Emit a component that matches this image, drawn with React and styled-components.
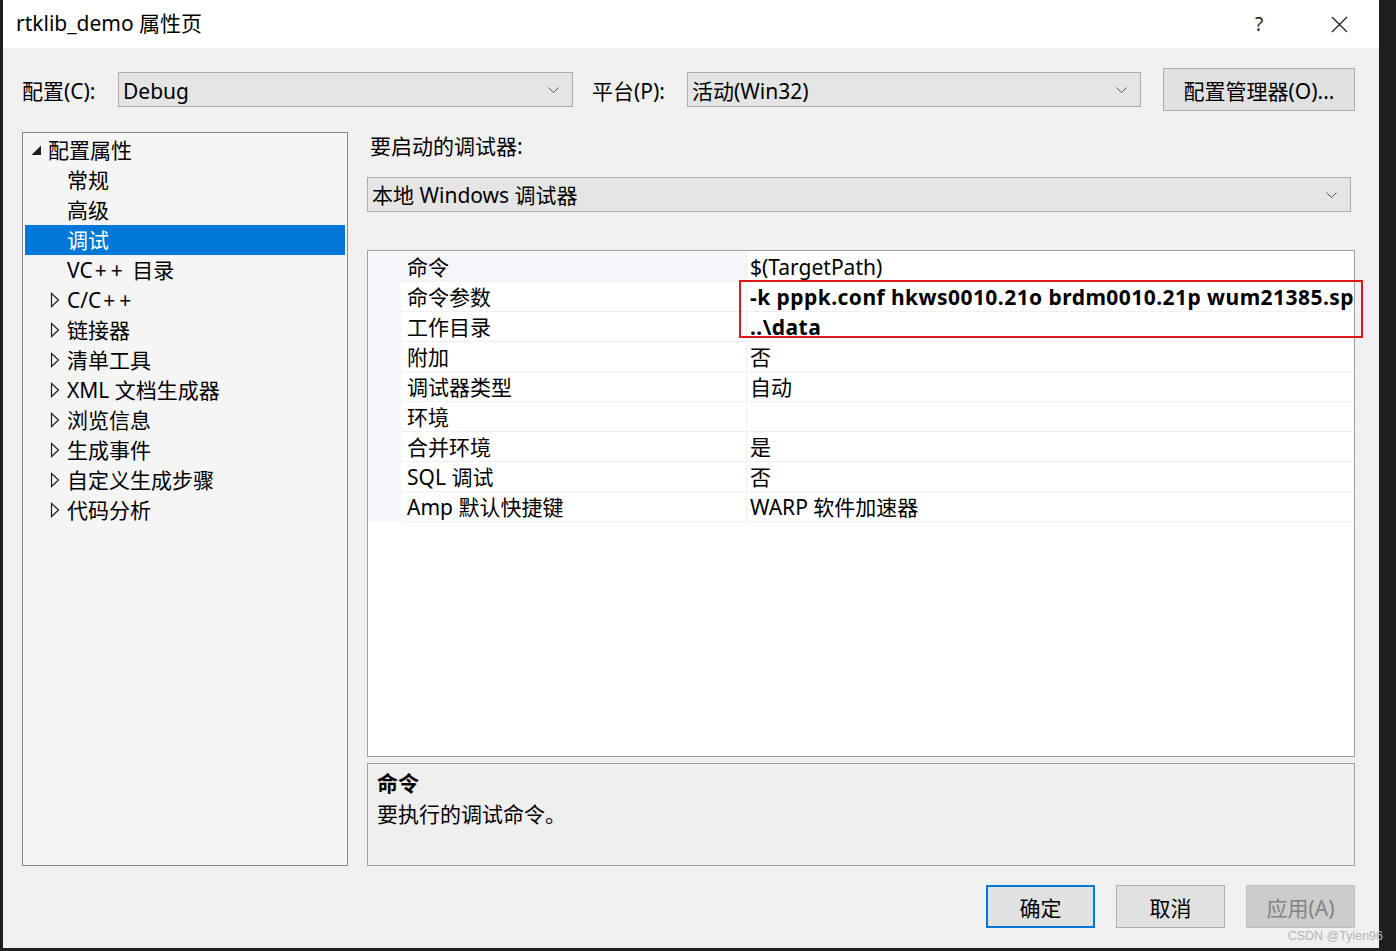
import styled, { createGlobalStyle } from "styled-components";

const GlobalStyle = createGlobalStyle`
  html, body {
    margin: 0;
    padding: 0;
    background: #1e1e1e;
  }
  body {
    font-family: "Noto Sans", "Noto Sans CJK SC", sans-serif;
    font-size: 21px;
    color: #000;
  }
  * {
    box-sizing: border-box;
  }
`;

const Dialog = styled.div`
  position: relative;
  width: 1376px;
  height: 948px;
  margin-left: 3px;
  background: #f0f0f0;
  display: flex;
  flex-direction: column;
`;

const TitleBar = styled.div`
  height: 48px;
  background: #fff;
  display: flex;
  align-items: center;
  padding-left: 13px;
`;

const Title = styled.div`
  flex: 1;
  font-size: 21px;
  line-height: 24px;
  margin-top: -2px;
`;

const TitleButton = styled.div`
  width: 80px;
  height: 48px;
  display: flex;
  align-items: center;
  justify-content: center;
  font-size: 19px;
  color: #222;
`;

const Content = styled.div`
  flex: 1;
  display: flex;
  flex-direction: column;
  padding: 20px 24px 0 19px;
`;

const ConfigRow = styled.div`
  display: flex;
  align-items: center;
  height: 43px;
`;

const Label = styled.div`
  width: ${(p) => p.width}px;
  line-height: 28px;
  padding-top: 2px;
`;

const Select = styled.div`
  width: ${(p) => p.width}px;
  height: 35px;
  margin-right: ${(p) => p.gap || 0}px;
  background: #e5e5e5;
  border: 1px solid #acacac;
  display: flex;
  align-items: center;
  padding: 2px 13px 0 4px;
  line-height: 28px;
  span {
    flex: 1;
  }
`;

const Button = styled.div`
  width: ${(p) => p.width || 109}px;
  height: 43px;
  display: flex;
  align-items: center;
  justify-content: center;
  background: ${(p) => (p.disabled ? "#cccccc" : "#e1e1e1")};
  border: ${(p) => (p.primary ? "2px solid #0078d7" : p.disabled ? "1px solid #bfbfbf" : "1px solid #adadad")};
  color: ${(p) => (p.disabled ? "#838383" : "#000")};
`;

const Body = styled.div`
  display: flex;
  gap: 19px;
  margin-top: 21px;
  height: 734px;
`;

const Tree = styled.div`
  width: 326px;
  background: #f5f5f5;
  border: 1px solid #828790;
  padding: 2px;
`;

const TreeItem = styled.div`
  height: 30px;
  display: flex;
  align-items: center;
  padding-left: ${(p) => p.indent}px;
  background: ${(p) => (p.selected ? "#0078d7" : "transparent")};
  color: ${(p) => (p.selected ? "#fff" : "#000")};
  line-height: 28px;
  white-space: pre;
`;

/* the "++" in VC++ / C/C++ is drawn with loose spacing in the tree font */
const Plus = styled.span`
  letter-spacing: 4px;
  padding-left: 2px;
`;

const Expander = styled.span`
  width: 17px;
  display: flex;
  align-items: center;
`;

const RightPane = styled.div`
  flex: 1;
  display: flex;
  flex-direction: column;
`;

const PaneLabel = styled.div`
  line-height: 28px;
  padding-left: 3px;
  height: 45px;
`;

const Grid = styled.div`
  position: relative;
  margin-top: 38px;
  height: 508px;
  background: #fff;
  border: 1px solid #a0a0a0;
  padding-top: 1px;
`;

const GridRow = styled.div`
  display: grid;
  grid-template-columns: 33px 346px 1fr;
  height: 30px;
`;

const Gutter = styled.div`
  background: #f4f6fa;
`;

const NameCell = styled.div`
  background: ${(p) => (p.active ? "#f4f6fa" : "#fff")};
  border-bottom: 1px solid #f0f0f0;
  border-right: 1px solid #f0f0f0;
  padding: 1px 0 0 6px;
  line-height: 28px;
  white-space: nowrap;
`;

const ValueCell = styled.div`
  border-bottom: 1px solid #f0f0f0;
  padding: 1px 0 0 3px;
  line-height: 28px;
  white-space: nowrap;
  overflow: hidden;
  font-weight: ${(p) => (p.bold ? 700 : 400)};
  letter-spacing: ${(p) => (p.bold ? "0.45px" : "0")};
`;

const Highlight = styled.div`
  position: absolute;
  left: 371px;
  top: 29px;
  width: 624px;
  height: 58px;
  border: 2px solid #e3151c;
  pointer-events: none;
`;

const Description = styled.div`
  margin-top: 6px;
  height: 103px;
  background: #efefef;
  border: 1px solid #a0a0a0;
  padding: 4px 9px;
  line-height: 31px;
  b {
    display: block;
  }
`;

const Footer = styled.div`
  display: flex;
  justify-content: flex-end;
  gap: 21px;
  margin-top: 19px;
`;

const Watermark = styled.div`
  position: absolute;
  right: -4px;
  bottom: 5px;
  font-family: "Liberation Sans", Arial, sans-serif;
  font-size: 12.5px;
  color: #b4b4b4;
  white-space: nowrap;
`;

const Chevron = () => (
  <svg width="11" height="7" viewBox="0 0 11 7">
    <path d="M0.5 0.5 L5.5 5.5 L10.5 0.5" fill="none" stroke="#555" strokeWidth="1" />
  </svg>
);

const Collapsed = () => (
  <svg width="10" height="16" viewBox="0 0 10 16">
    <path d="M1.5 1.5 L8.5 8 L1.5 14.5 Z" fill="none" stroke="#1e1e1e" strokeWidth="1.2" />
  </svg>
);

const Expanded = () => (
  <svg width="11" height="11" viewBox="0 0 11 11">
    <path d="M10 0.5 L10 10 L0.5 10 Z" fill="#1e1e1e" />
  </svg>
);

const CloseIcon = () => (
  <svg width="17" height="17" viewBox="0 0 17 17">
    <path d="M1 1 L16 16 M16 1 L1 16" stroke="#222" strokeWidth="1.3" />
  </svg>
);

const treeItems = [
  { id: "props", label: "配置属性", level: 0, state: "open" },
  { id: "general", label: "常规", level: 1 },
  { id: "advanced", label: "高级", level: 1 },
  { id: "debug", label: "调试", level: 1, selected: true },
  { id: "vcdirs", label: <>VC<Plus>++</Plus> 目录</>, level: 1 },
  { id: "cpp", label: <>C/C<Plus>++</Plus></>, level: 1, state: "closed" },
  { id: "linker", label: "链接器", level: 1, state: "closed" },
  { id: "manifest", label: "清单工具", level: 1, state: "closed" },
  { id: "xmldoc", label: "XML 文档生成器", level: 1, state: "closed" },
  { id: "browse", label: "浏览信息", level: 1, state: "closed" },
  { id: "events", label: "生成事件", level: 1, state: "closed" },
  { id: "custom", label: "自定义生成步骤", level: 1, state: "closed" },
  { id: "analysis", label: "代码分析", level: 1, state: "closed" },
];

const properties = [
  { name: "命令", value: "$(TargetPath)", active: true },
  { name: "命令参数", value: "-k pppk.conf hkws0010.21o brdm0010.21p wum21385.sp", bold: true },
  { name: "工作目录", value: "..\\data", bold: true },
  { name: "附加", value: "否" },
  { name: "调试器类型", value: "自动" },
  { name: "环境", value: "" },
  { name: "合并环境", value: "是" },
  { name: "SQL 调试", value: "否" },
  { name: "Amp 默认快捷键", value: "WARP 软件加速器" },
];

const App = () => {
  return (
    <>
      <GlobalStyle />
      <Dialog>
        <TitleBar>
          <Title>rtklib_demo 属性页</Title>
          <TitleButton>?</TitleButton>
          <TitleButton>
            <CloseIcon />
          </TitleButton>
        </TitleBar>
        <Content>
          <ConfigRow>
            <Label width={96}>配置(C):</Label>
            <Select width={455} gap={19}>
              <span>Debug</span>
              <Chevron />
            </Select>
            <Label width={95}>平台(P):</Label>
            <Select width={454} gap={22}>
              <span>活动(Win32)</span>
              <Chevron />
            </Select>
            <Button width={192}>配置管理器(O)...</Button>
          </ConfigRow>
          <Body>
            <Tree>
              {treeItems.map((item) => (
                <TreeItem
                  key={item.id}
                  indent={item.level === 0 ? 6 : 25}
                  selected={item.selected}
                >
                  <Expander>
                    {item.state === "open" && <Expanded />}
                    {item.state === "closed" && <Collapsed />}
                  </Expander>
                  {item.label}
                </TreeItem>
              ))}
            </Tree>
            <RightPane>
              <PaneLabel>要启动的调试器:</PaneLabel>
              <Select width={984}>
                <span>本地 Windows 调试器</span>
                <Chevron />
              </Select>
              <Grid>
                {properties.map((p) => (
                  <GridRow key={p.name}>
                    <Gutter />
                    <NameCell active={p.active}>{p.name}</NameCell>
                    <ValueCell bold={p.bold}>{p.value}</ValueCell>
                  </GridRow>
                ))}
                <Highlight />
              </Grid>
              <Description>
                <b>命令</b>
                要执行的调试命令。
              </Description>
            </RightPane>
          </Body>
          <Footer>
            <Button primary>确定</Button>
            <Button>取消</Button>
            <Button disabled>应用(A)</Button>
          </Footer>
        </Content>
        <Watermark>CSDN @Tylen96</Watermark>
      </Dialog>
    </>
  );
};

export default App;
